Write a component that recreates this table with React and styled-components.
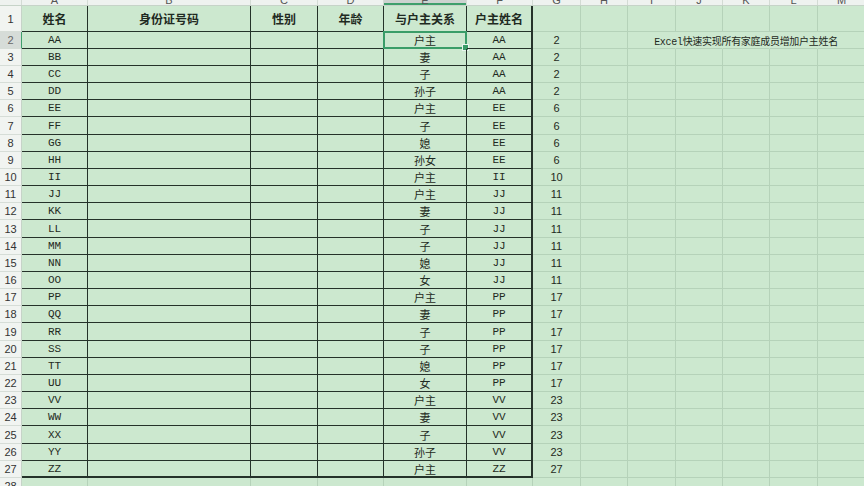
import React from "react"
import styled, { createGlobalStyle } from "styled-components"

const GlobalStyle = createGlobalStyle`
  html, body {
    margin: 0;
    padding: 0;
    background: #cce8cf;
    overflow: hidden;
  }
  * { box-sizing: border-box; }
`

const COLS = [
  { key: "A", w: 66 },
  { key: "B", w: 163 },
  { key: "C", w: 67 },
  { key: "D", w: 66 },
  { key: "E", w: 83 },
  { key: "F", w: 66 },
  { key: "G", w: 48 },
  { key: "H", w: 47 },
  { key: "I", w: 48 },
  { key: "J", w: 47 },
  { key: "K", w: 47 },
  { key: "L", w: 48 },
  { key: "M", w: 48 },
]

const HEADERS = ["姓名", "身份证号码", "性别", "年龄", "与户主关系", "户主姓名"]

const DATA = [
  ["AA", "户主", "AA", 2],
  ["BB", "妻", "AA", 2],
  ["CC", "子", "AA", 2],
  ["DD", "孙子", "AA", 2],
  ["EE", "户主", "EE", 6],
  ["FF", "子", "EE", 6],
  ["GG", "媳", "EE", 6],
  ["HH", "孙女", "EE", 6],
  ["II", "户主", "II", 10],
  ["JJ", "户主", "JJ", 11],
  ["KK", "妻", "JJ", 11],
  ["LL", "子", "JJ", 11],
  ["MM", "子", "JJ", 11],
  ["NN", "媳", "JJ", 11],
  ["OO", "女", "JJ", 11],
  ["PP", "户主", "PP", 17],
  ["QQ", "妻", "PP", 17],
  ["RR", "子", "PP", 17],
  ["SS", "子", "PP", 17],
  ["TT", "媳", "PP", 17],
  ["UU", "女", "PP", 17],
  ["VV", "户主", "VV", 23],
  ["WW", "妻", "VV", 23],
  ["XX", "子", "VV", 23],
  ["YY", "孙子", "VV", 23],
  ["ZZ", "户主", "ZZ", 27],
]

const TALL_ROWS = [7, 13, 19, 25]

const Sheet = styled.div`
  display: flex;
  flex-direction: column;
  width: 864px;
  height: 486px;
  overflow: hidden;
  font-family: "Liberation Sans", "Noto Sans CJK SC", sans-serif;
`

const ColHeaderBar = styled.div`
  display: flex;
  height: 6px;
  overflow: hidden;
  flex-shrink: 0;
  background: #eef2ef;
  border-bottom: 1px solid #c6d3c8;
`

const ColHeader = styled.div`
  flex: 0 0 ${(p) => p.$w}px;
  display: flex;
  justify-content: center;
  align-items: flex-end;
  border-right: 1px solid #d3dbd4;
  background: ${(p) => (p.$active ? "#cdd3d0" : "transparent")};
  box-shadow: ${(p) => (p.$active ? "inset 0 -2px 0 #3f9f6c" : "none")};
  font-size: 11px;
  color: #555;
  span {
    line-height: 12px;
    margin-bottom: -1px;
  }
`

const Row = styled.div`
  display: flex;
  flex-shrink: 0;
  height: ${(p) => p.$h}px;
`

const RowNum = styled.div`
  flex: 0 0 22px;
  display: flex;
  align-items: center;
  justify-content: center;
  font-size: 11px;
  color: ${(p) => (p.$active ? "#666" : "#333")};
  background: ${(p) => (p.$active ? "#d6dcd8" : "#f1f4f1")};
  border-right: 1px solid ${(p) => (p.$active ? "#3f9f6c" : "#c6d3c8")};
  border-bottom: 1px solid #d6ddd7;
`

const Cell = styled.div`
  position: relative;
  flex: 0 0 ${(p) => p.$w}px;
  display: flex;
  align-items: center;
  justify-content: center;
  white-space: nowrap;
  border-right: 1px solid ${(p) => (p.$dark ? "#25322a" : "#b5d2b9")};
  border-bottom: ${(p) => (p.$thick ? 2 : 1)}px solid
    ${(p) => (p.$dark ? "#25322a" : "#b5d2b9")};
  ${(p) => p.$thickRight && "border-right-width: 2px;"}
  ${(p) => p.$hideRight && "border-right-color: transparent;"}
  font-family: ${(p) =>
    p.$mono
      ? `"Liberation Mono", "Noto Sans CJK SC", monospace`
      : `"Liberation Sans", "Noto Sans CJK SC", sans-serif`};
  font-size: ${(p) => (p.$bold ? 12 : 11)}px;
  font-weight: ${(p) => (p.$bold ? 700 : 400)};
  color: #1f2a22;
`

const Selection = styled.div`
  position: absolute;
  inset: -1px -1px -1px -1px;
  border: 2px solid #3a9d68;
  pointer-events: none;
  &::after {
    content: "";
    position: absolute;
    right: -4px;
    bottom: -4px;
    width: 5px;
    height: 5px;
    background: #3a9d68;
    border: 1px solid #e9f5ee;
  }
`

/* text that spills out of its cell, centred on it */
const Note = styled.span`
  position: absolute;
  z-index: 2;
  left: 50%;
  top: 50%;
  transform: translate(-50%, -50%);
  font-family: "Liberation Mono", "Noto Sans CJK SC", monospace;
  font-size: 10px;
  color: #1f2a22;
  letter-spacing: -0.3px;
`

const buildCells = (rowIdx, values) =>
  COLS.map((c, i) => {
    const inTable = i < 6 && rowIdx <= 27
    return {
      key: c.key,
      w: c.w,
      dark: inTable,
      thick: inTable && rowIdx === 27,
      thickRight: inTable && i === 5,
      value: values[i],
    }
  })

export default function App() {
  const rows = []

  rows.push({
    n: 1,
    h: 26,
    cells: buildCells(1, [...HEADERS, ""]),
    bold: true,
  })

  DATA.forEach(([name, rel, head, g], i) => {
    const n = i + 2
    rows.push({
      n,
      h: TALL_ROWS.includes(n) ? 18 : 17,
      cells: buildCells(n, [name, "", "", "", rel, head, g]),
    })
  })

  rows.push({ n: 28, h: 17, cells: buildCells(28, []) })

  return (
    <>
      <GlobalStyle />
      <Sheet>
        <ColHeaderBar>
          <ColHeader $w={22} />
          {COLS.map((c) => (
            <ColHeader key={c.key} $w={c.w} $active={c.key === "E"}>
              <span>{c.key}</span>
            </ColHeader>
          ))}
        </ColHeaderBar>
        {rows.map((r) => (
          <Row key={r.n} $h={r.h}>
            <RowNum $active={r.n === 2}>{r.n}</RowNum>
            {r.cells.map((c, i) => {
              const noteRow = r.n === 2
              return (
                <Cell
                  key={c.key}
                  $w={c.w}
                  $dark={c.dark}
                  $thick={c.thick}
                  $thickRight={c.thickRight}
                  $hideRight={noteRow && i >= 8 && i <= 11}
                  $bold={r.bold}
                  $mono={!r.bold && (i === 0 || i === 5)}
                >
                  {c.value}
                  {r.n === 2 && c.key === "E" && <Selection />}
                  {noteRow && c.key === "K" && (
                    <Note>Excel快速实现所有家庭成员增加户主姓名</Note>
                  )}
                </Cell>
              )
            })}
          </Row>
        ))}
      </Sheet>
    </>
  )
}
